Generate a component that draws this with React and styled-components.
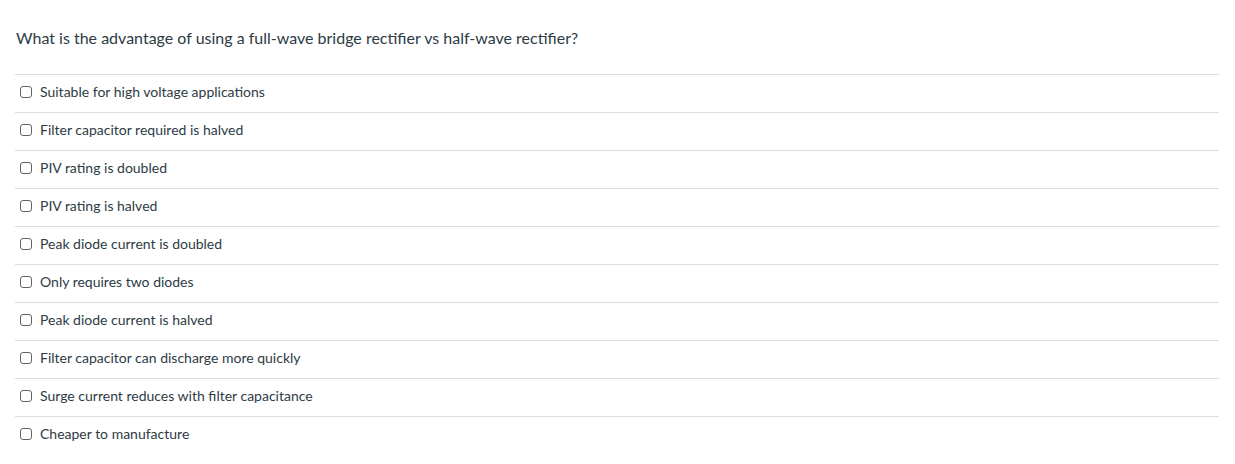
import React from 'react';
import styled, { createGlobalStyle } from 'styled-components';

const Global = createGlobalStyle`
    body {
        margin: 0;
        background: #ffffff;
        font-family: 'Lato', 'Helvetica Neue', Arial, sans-serif;
        color: #2d3b45;
    }
`;

const Quiz = styled.div`
    width: 1204px;
    margin-left: 15px;
`;

const Question = styled.div`
    height: 74px;
    box-sizing: border-box;
    padding: 28px 0 0 1px;
    font-size: 16px;
    line-height: 20px;
    color: #2d3b45;
`;

const Answers = styled.ul`
    list-style: none;
    margin: 0;
    padding: 0;
`;

const Answer = styled.li`
    height: 38px;
    box-sizing: border-box;
    border-top: 1px solid #dcdcdc;
    display: flex;
    align-items: center;
    padding: 0 0 5px 5px;
    font-size: 14px;
    color: #2d3b45;
`;

const Box = styled.span`
    width: 10px;
    height: 10px;
    border: 1px solid #5f6368;
    border-radius: 3px;
    background: #fff;
    margin: 1px 8px 0 0;
    flex: none;
`;

const answers = [
    'Suitable for high voltage applications',
    'Filter capacitor required is halved',
    'PIV rating is doubled',
    'PIV rating is halved',
    'Peak diode current is doubled',
    'Only requires two diodes',
    'Peak diode current is halved',
    'Filter capacitor can discharge more quickly',
    'Surge current reduces with filter capacitance',
    'Cheaper to manufacture',
];

export default function App() {
    return (
        <Quiz>
            <Global />
            <Question>What is the advantage of using a full-wave bridge rectifier vs half-wave rectifier?</Question>
            <Answers>
                {answers.map((a) => (
                    <Answer key={a}>
                        <Box />
                        {a}
                    </Answer>
                ))}
            </Answers>
        </Quiz>
    );
}
